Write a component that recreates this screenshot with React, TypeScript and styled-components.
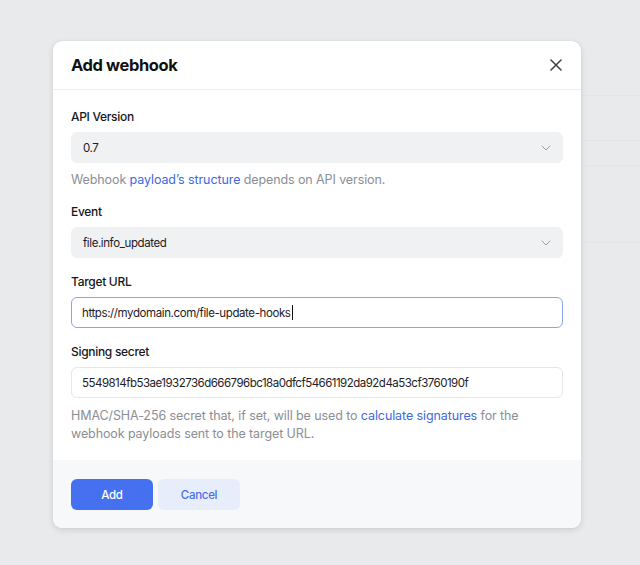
import React from "react";
import styled, { createGlobalStyle } from "styled-components";

const GlobalStyle = createGlobalStyle`
  html, body {
    margin: 0;
    padding: 0;
    background: #e9eaec;
    font-family: Inter, "Noto Sans", "Liberation Sans", sans-serif;
    -webkit-font-smoothing: antialiased;
  }
`;

const Page = styled.div`
  position: relative;
  width: 640px;
  height: 565px;
  overflow: hidden;
  background: #e9eaec;
`;

const Backdrop = styled.div`
  position: absolute;
  inset: 0 0 0 400px;
  display: flex;
  flex-direction: column;
  padding-top: 95px;
`;

const BackRow = styled.div<{ $h: number }>`
  height: ${(p) => p.$h}px;
  border-top: 1px solid #e4e5e7;
`;

const Overlay = styled.div`
  position: absolute;
  inset: 0;
  display: flex;
  align-items: flex-start;
  padding: 41px 0 0 53px;
`;

const Modal = styled.div`
  width: 528px;
  background: #fff;
  border-radius: 9px;
  box-shadow: 0 2px 6px rgba(0, 0, 0, 0.12), 0 0 1px rgba(0, 0, 0, 0.15);
  overflow: hidden;
`;

const Header = styled.div`
  height: 48px;
  display: flex;
  align-items: center;
  justify-content: space-between;
  padding: 0 18px;
  border-bottom: 1px solid #eeeff1;
`;

const Title = styled.h2`
  margin: 0;
  font-size: 16.5px;
  font-weight: 700;
  color: #111;
  letter-spacing: -0.4px;
`;

const CloseButton = styled.button`
  border: 0;
  background: none;
  padding: 0;
  width: 20px;
  height: 20px;
  display: flex;
  align-items: center;
  justify-content: center;
  color: #3d4047;
  margin-right: -3px;
`;

const Body = styled.div`
  padding: 18px 18px 17px;
  display: flex;
  flex-direction: column;
`;

const Field = styled.div<{ $gap?: number }>`
  display: flex;
  flex-direction: column;
  margin-bottom: ${(p) => p.$gap ?? 15}px;
`;

const Label = styled.label`
  font-size: 12px;
  font-weight: 500;
  color: #15171a;
  line-height: 18px;
  letter-spacing: -0.3px;
  margin-bottom: 6px;
`;

const SelectBox = styled.div`
  height: 31px;
  border-radius: 6px;
  background: #f0f1f3;
  display: flex;
  align-items: center;
  justify-content: space-between;
  padding: 0 12px;
  font-size: 11.5px;
  letter-spacing: -0.4px;
  color: #1e2024;
`;

const Input = styled.div<{ $focus?: boolean; $tight?: boolean }>`
  height: 31px;
  box-sizing: border-box;
  border-radius: 6px;
  border: 1px solid ${(p) => (p.$focus ? "#8ea3ef" : "#e6e7ea")};
  background: #fff;
  display: flex;
  align-items: center;
  padding: 0 10px;
  font-size: 11.5px;
  letter-spacing: ${(p) => (p.$tight ? "-0.51px" : "-0.4px")};
  color: #1e2024;
  white-space: nowrap;
`;

const Caret = styled.span`
  display: inline-block;
  width: 1px;
  height: 15px;
  background: #111;
  margin-left: 1px;
`;

const Help = styled.p<{ $top?: number }>`
  margin: ${(p) => p.$top ?? 8}px 0 0;
  font-size: 12.5px;
  letter-spacing: -0.1px;
  line-height: 18px;
  color: #8a8e96;
`;

const Link = styled.a`
  color: #4068e0;
  text-decoration: none;
`;

const Footer = styled.div`
  background: #f7f8fa;
  padding: 19px 18px 18px;
  display: flex;
  gap: 5px;
`;

const Button = styled.button<{ $primary?: boolean }>`
  width: 82px;
  height: 31px;
  border-radius: 6px;
  border: 0;
  font-family: inherit;
  font-size: 11.5px;
  letter-spacing: -0.3px;
  font-weight: 500;
  background: ${(p) => (p.$primary ? "#4570f0" : "#e8edfc")};
  color: ${(p) => (p.$primary ? "#fff" : "#4a6ee6")};
`;

const Chevron = () => (
  <svg width="10" height="6" viewBox="0 0 10 6" fill="none">
    <path d="M1 1l4 4 4-4" stroke="#9a9ea6" strokeWidth="1" strokeLinecap="round" strokeLinejoin="round" />
  </svg>
);

const CloseIcon = () => (
  <svg width="12" height="12" viewBox="0 0 12 12" fill="none">
    <path d="M1 1l10 10M11 1L1 11" stroke="currentColor" strokeWidth="1.5" strokeLinecap="round" />
  </svg>
);

const App = () => {
  return (
    <>
      <GlobalStyle />
      <Page>
        <Backdrop>
          <BackRow $h={44} />
          <BackRow $h={24} />
          <BackRow $h={76} />
          <BackRow $h={44} />
        </Backdrop>
        <Overlay>
          <Modal>
            <Header>
              <Title>Add webhook</Title>
              <CloseButton type="button">
                <CloseIcon />
              </CloseButton>
            </Header>
            <Body>
              <Field $gap={14}>
                <Label>API Version</Label>
                <SelectBox>
                  <span>0.7</span>
                  <Chevron />
                </SelectBox>
                <Help>
                  Webhook <Link>payload’s structure</Link> depends on API version.
                </Help>
              </Field>
              <Field>
                <Label>Event</Label>
                <SelectBox>
                  <span>file.info_updated</span>
                  <Chevron />
                </SelectBox>
              </Field>
              <Field>
                <Label>Target URL</Label>
                <Input $focus>
                  https://mydomain.com/file-update-hooks
                  <Caret />
                </Input>
              </Field>
              <Field $gap={0}>
                <Label>Signing secret</Label>
                <Input $tight>5549814fb53ae1932736d666796bc18a0dfcf54661192da92d4a53cf3760190f</Input>
                <Help $top={9}>
                  HMAC/SHA-256 secret that, if set, will be used to <Link>calculate signatures</Link> for the
                  webhook payloads sent to the target URL.
                </Help>
              </Field>
            </Body>
            <Footer>
              <Button $primary type="button">Add</Button>
              <Button type="button">Cancel</Button>
            </Footer>
          </Modal>
        </Overlay>
      </Page>
    </>
  );
};

export default App;
